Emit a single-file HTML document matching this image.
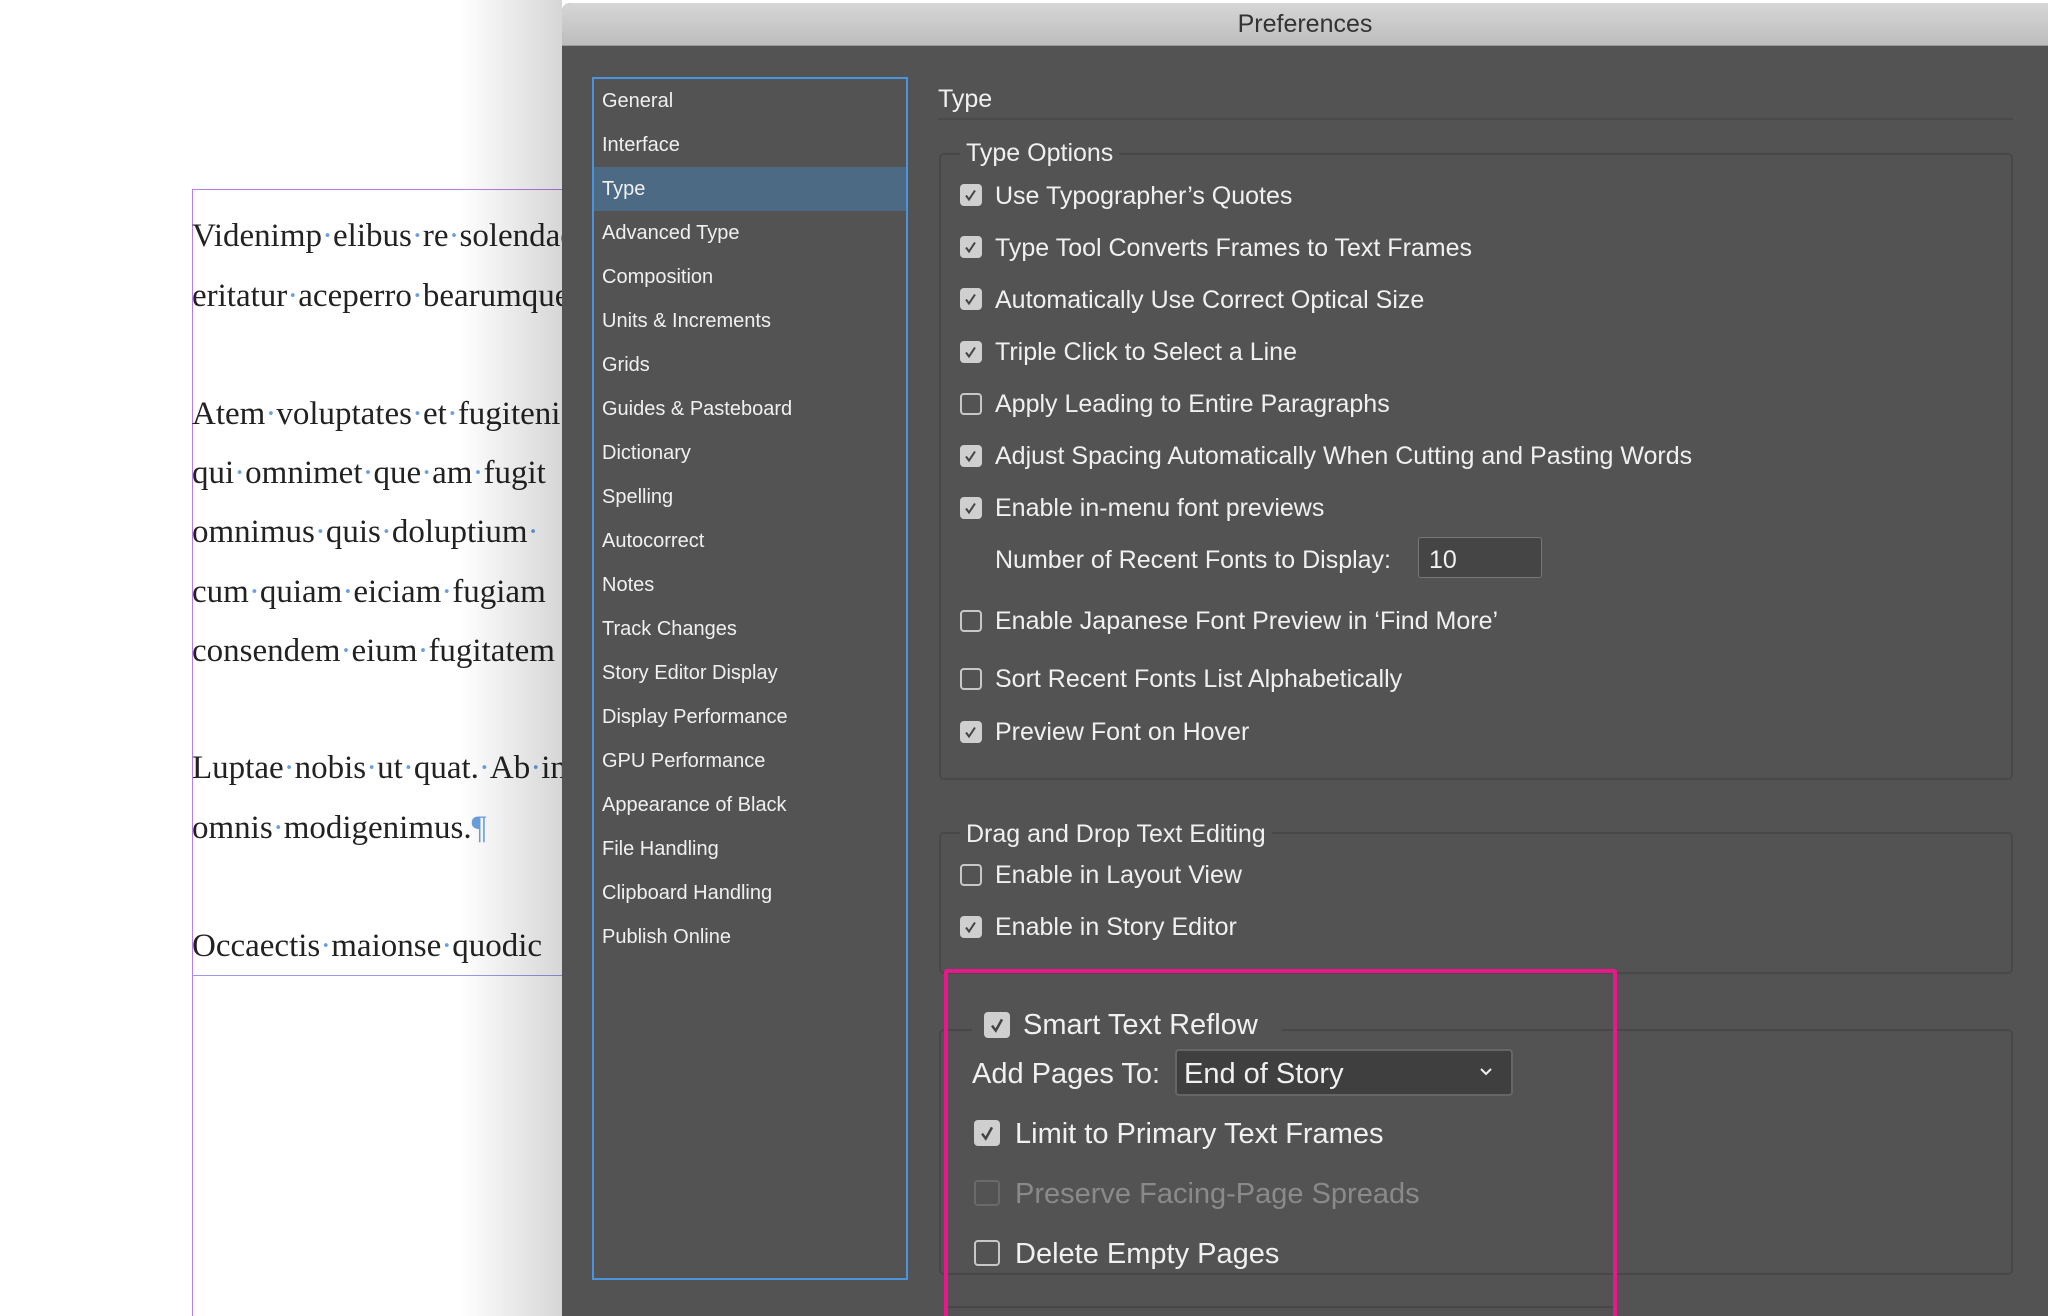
<!DOCTYPE html>
<html style="overflow:hidden;width:2048px;height:1316px"><head><meta charset="utf-8"><style>
*{margin:0;padding:0;box-sizing:border-box}
body{width:2048px;height:1316px;overflow:hidden;background:#fff;position:relative;font-family:"Liberation Sans",sans-serif}
.doc{position:absolute;font-family:"Liberation Serif",serif;font-size:33px;color:#222;left:192px;white-space:nowrap;line-height:1}
.doc i{font-style:normal;color:#6aa0e0}
.frame{position:absolute;left:192px;top:189px;width:600px;height:1127px;border-left:1px solid #b77ee8;border-top:1px solid #b77ee8}
.fb{position:absolute;left:192px;top:975px;width:600px;border-top:1px solid #9a9ae8}
.shadow{position:absolute;left:460px;top:0;width:102px;height:1316px;background:linear-gradient(to right,rgba(0,0,0,0),rgba(0,0,0,.16))}
.dlg{position:absolute;left:562px;top:3px;width:1486px;height:1313px;background:#535353;border-radius:8px 0 0 0;overflow:hidden}
.title{height:43px;background:linear-gradient(#d6d6d6,#bdbdbd);border-bottom:1px solid #9a9a9a;text-align:center;font-size:25px;line-height:43px;color:#333}
.side{position:absolute;left:30px;top:74px;width:316px;height:1203px;border:2px solid #4a94dc;background:#535353}
.side div{height:44px;line-height:44px;padding-left:8px;color:#f0f0f0;font-size:20px}
.side .sel{background:#4d6a85}
.t{position:absolute;color:#f0f0f0;font-size:25px;white-space:nowrap;line-height:1}
.box{position:absolute;border:2px solid #484848;border-radius:5px}
.lbl{position:absolute;background:#535353;padding:0 6px;color:#f0f0f0;font-size:25px;line-height:1}
.cb{position:absolute;width:22px;height:22px;border-radius:4px;background:#cfcfcf}
.cb svg{position:absolute;left:3px;top:3px}
.cb.off{background:transparent;border:2px solid #c8c8c8}
.cb.dim{background:transparent;border:2px solid #6a6a6a}
.b{font-size:29px}
</style></head><body>
<div class="frame"></div><div class="fb"></div>
<div class="doc" style="top:220px">Videnimp<i>·</i>elibus<i>·</i>re<i>·</i>solendae</div>
<div class="doc" style="top:280px">eritatur<i>·</i>aceperro<i>·</i>bearumque</div>
<div class="doc" style="top:398px">Atem<i>·</i>voluptates<i>·</i>et<i>·</i>fugiteni</div>
<div class="doc" style="top:457px">qui<i>·</i>omnimet<i>·</i>que<i>·</i>am<i>·</i>fugit</div>
<div class="doc" style="top:516px">omnimus<i>·</i>quis<i>·</i>doluptium<i>·</i></div>
<div class="doc" style="top:576px">cum<i>·</i>quiam<i>·</i>eiciam<i>·</i>fugiam</div>
<div class="doc" style="top:635px">consendem<i>·</i>eium<i>·</i>fugitatem</div>
<div class="doc" style="top:752px">Luptae<i>·</i>nobis<i>·</i>ut<i>·</i>quat.<i>·</i>Ab<i>·</i>int</div>
<div class="doc" style="top:812px">omnis<i>·</i>modigenimus.<i>¶</i></div>
<div class="doc" style="top:930px">Occaectis<i>·</i>maionse<i>·</i>quodic</div>
<div class="shadow"></div>
<div class="dlg">
<div class="title">Preferences</div>
<div class="side">
<div>General</div><div>Interface</div><div class="sel">Type</div><div>Advanced Type</div><div>Composition</div><div>Units &amp; Increments</div><div>Grids</div><div>Guides &amp; Pasteboard</div><div>Dictionary</div><div>Spelling</div><div>Autocorrect</div><div>Notes</div><div>Track Changes</div><div>Story Editor Display</div><div>Display Performance</div><div>GPU Performance</div><div>Appearance of Black</div><div>File Handling</div><div>Clipboard Handling</div><div>Publish Online</div>
</div>
<div class="t" style="left:376px;top:84px">Type</div>
<div style="position:absolute;left:376px;top:115px;width:1075px;border-top:2px solid #4a4a4a"></div>

<div class="box" style="left:377px;top:150px;width:1074px;height:627px"></div>
<div class="lbl" style="left:398px;top:138px">Type Options</div>

<div class="box" style="left:377px;top:829px;width:1074px;height:142px"></div>
<div class="lbl" style="left:398px;top:819px">Drag and Drop Text Editing</div>

<div class="box" style="left:377px;top:1026px;width:1074px;height:246px"></div>
<div style="position:absolute;left:382px;top:966px;width:673px;height:360px;border:4px solid #e8188a;border-radius:3px"></div>
<div style="position:absolute;left:386px;top:1303px;width:665px;border-top:2px solid #474747"></div>
<div style="position:absolute;left:410px;top:1008px;width:310px;height:30px;background:#535353"></div>
<div class="cb" style="left:422px;top:1009px;width:26px;height:26px"><svg width="20" height="20" viewBox="0 0 16 16"><path d="M4 8.5l3 4 5-9" stroke="#444" stroke-width="2" fill="none"/></svg></div>
<div class="t b" style="left:461px;top:1008px">Smart Text Reflow</div>
<div class="t b" style="left:410px;top:1057px">Add Pages To:</div>
<div style="position:absolute;left:613px;top:1046px;width:338px;height:47px;background:#3f3f3f;border:2px solid #666;border-radius:4px"></div>
<div class="t b" style="left:622px;top:1057px">End of Story</div>
<svg style="position:absolute;left:916px;top:1063px" width="16" height="12" viewBox="0 0 16 12"><path d="M3 3l5 5 5-5" stroke="#eee" stroke-width="2" fill="none"/></svg>
<div class="cb" style="left:412px;top:1117px;width:26px;height:26px"><svg width="20" height="20" viewBox="0 0 16 16"><path d="M4 8.5l3 4 5-9" stroke="#444" stroke-width="2" fill="none"/></svg></div>
<div class="t b" style="left:453px;top:1117px">Limit to Primary Text Frames</div>
<div class="cb dim" style="left:412px;top:1177px;width:26px;height:26px"></div>
<div class="t b" style="left:453px;top:1177px;color:#8a8a8a">Preserve Facing-Page Spreads</div>
<div class="cb off" style="left:412px;top:1237px;width:26px;height:26px"></div>
<div class="t b" style="left:453px;top:1237px">Delete Empty Pages</div>

<div class="cb" style="left:398px;top:181px"><svg width="16" height="16" viewBox="0 0 16 16"><path d="M3 8.5l3 4 6-9" stroke="#444" stroke-width="2" fill="none"/></svg></div><div class="t" style="left:433px;top:181px">Use Typographer’s Quotes</div>
<div class="cb" style="left:398px;top:233px"><svg width="16" height="16" viewBox="0 0 16 16"><path d="M3 8.5l3 4 6-9" stroke="#444" stroke-width="2" fill="none"/></svg></div><div class="t" style="left:433px;top:233px">Type Tool Converts Frames to Text Frames</div>
<div class="cb" style="left:398px;top:285px"><svg width="16" height="16" viewBox="0 0 16 16"><path d="M3 8.5l3 4 6-9" stroke="#444" stroke-width="2" fill="none"/></svg></div><div class="t" style="left:433px;top:285px">Automatically Use Correct Optical Size</div>
<div class="cb" style="left:398px;top:338px"><svg width="16" height="16" viewBox="0 0 16 16"><path d="M3 8.5l3 4 6-9" stroke="#444" stroke-width="2" fill="none"/></svg></div><div class="t" style="left:433px;top:337px">Triple Click to Select a Line</div>
<div class="cb off" style="left:398px;top:390px"></div><div class="t" style="left:433px;top:389px">Apply Leading to Entire Paragraphs</div>
<div class="cb" style="left:398px;top:442px"><svg width="16" height="16" viewBox="0 0 16 16"><path d="M3 8.5l3 4 6-9" stroke="#444" stroke-width="2" fill="none"/></svg></div><div class="t" style="left:433px;top:441px">Adjust Spacing Automatically When Cutting and Pasting Words</div>
<div class="cb" style="left:398px;top:494px"><svg width="16" height="16" viewBox="0 0 16 16"><path d="M3 8.5l3 4 6-9" stroke="#444" stroke-width="2" fill="none"/></svg></div><div class="t" style="left:433px;top:493px">Enable in-menu font previews</div>
<div class="t" style="left:433px;top:545px">Number of Recent Fonts to Display:</div>
<div style="position:absolute;left:856px;top:534px;width:124px;height:41px;background:#454545;border:1px solid #777;border-radius:3px"></div>
<div class="t" style="left:867px;top:545px">10</div>
<div class="cb off" style="left:398px;top:607px"></div><div class="t" style="left:433px;top:606px">Enable Japanese Font Preview in ‘Find More’</div>
<div class="cb off" style="left:398px;top:665px"></div><div class="t" style="left:433px;top:664px">Sort Recent Fonts List Alphabetically</div>
<div class="cb" style="left:398px;top:718px"><svg width="16" height="16" viewBox="0 0 16 16"><path d="M3 8.5l3 4 6-9" stroke="#444" stroke-width="2" fill="none"/></svg></div><div class="t" style="left:433px;top:717px">Preview Font on Hover</div>
<div class="cb off" style="left:398px;top:861px"></div><div class="t" style="left:433px;top:860px">Enable in Layout View</div>
<div class="cb" style="left:398px;top:913px"><svg width="16" height="16" viewBox="0 0 16 16"><path d="M3 8.5l3 4 6-9" stroke="#444" stroke-width="2" fill="none"/></svg></div><div class="t" style="left:433px;top:912px">Enable in Story Editor</div>
</div>
</body></html>
